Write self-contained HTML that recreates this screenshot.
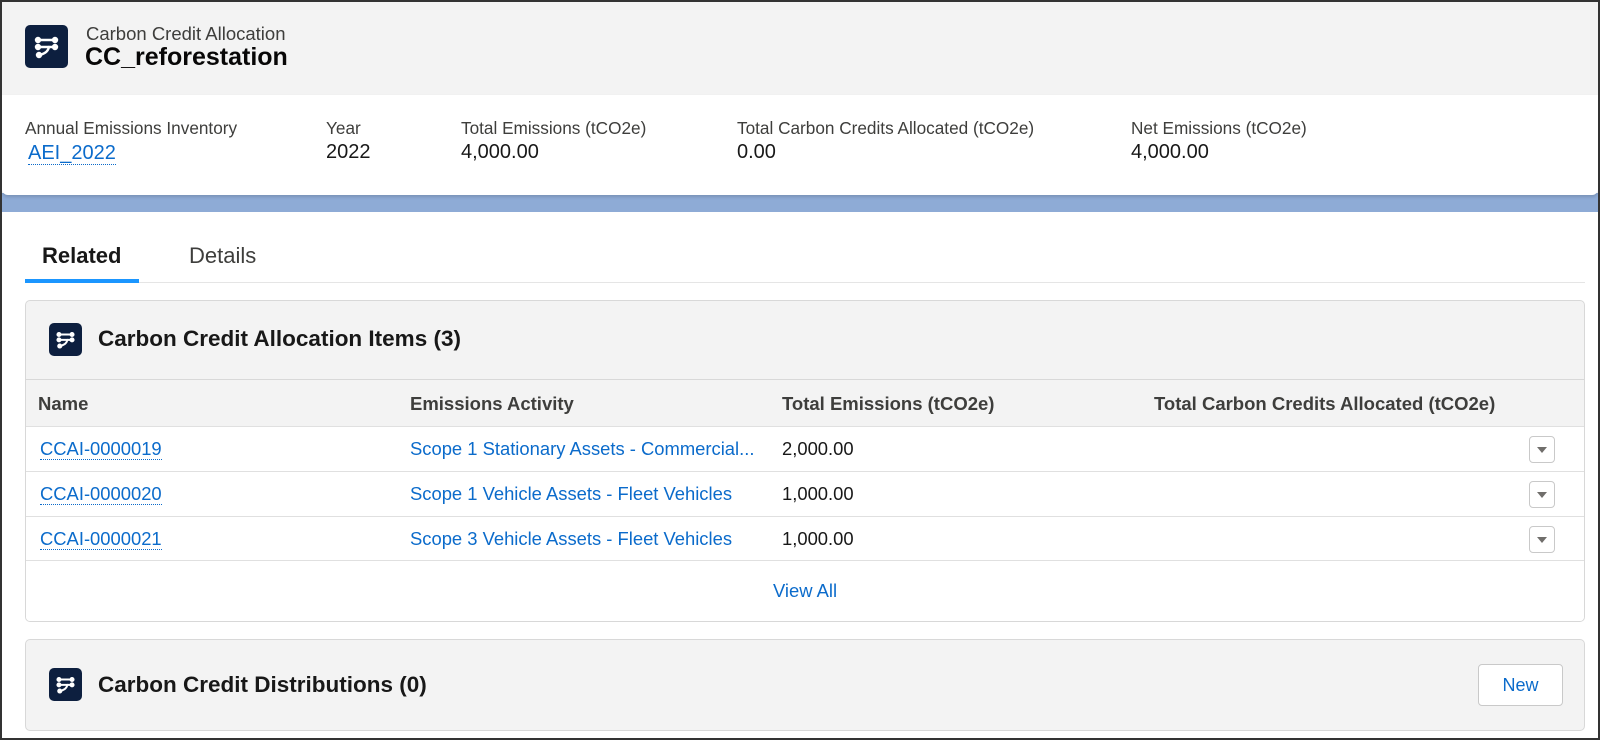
<!DOCTYPE html>
<html><head><meta charset="utf-8"><style>
*{box-sizing:border-box;margin:0;padding:0}
body{width:1600px;height:740px;overflow:hidden;background:#fff;font-family:"Liberation Sans",Arial,sans-serif;color:#181818;position:relative}
.frame{position:absolute;left:0;top:0;width:1600px;height:740px;border:2px solid #333;pointer-events:none;z-index:10}
.abs{position:absolute;white-space:nowrap}
.hdr{position:absolute;left:2px;top:2px;width:1596px;height:93px;background:#f3f3f3}
.band{position:absolute;left:2px;top:193px;width:1596px;height:19px;background:#8eabd6}
.hcard{position:absolute;left:2px;top:95px;width:1596px;height:100px;background:#fff;border-radius:0 0 6px 6px;box-shadow:0 2px 3px rgba(0,0,0,.15);z-index:2}
.icon{position:absolute;background:#0d1f3f;border-radius:5px}
.lbl{font-size:17.2px;color:#3e3e3c}
.val{font-size:20px;color:#181818}
.lnk{color:#0b6bcb;text-decoration:none}
.dot{border-bottom:1px dotted #0b6bcb}
.card{position:absolute;left:25px;width:1560px;border:1px solid #d8d8d8;border-radius:5px;background:#f3f3f3;overflow:hidden}
.th{font-size:18.5px;font-weight:bold;color:#3e3e3c}
.row{position:absolute;left:0;width:100%;background:#fff;border-top:1px solid #e0e0e0}
.td{position:absolute;font-size:18.4px;top:11px;white-space:nowrap}
.dd{position:absolute;left:1503px;top:9px;width:26px;height:27px;border:1px solid #c9c9c9;border-radius:4px;background:#fff}
.dd:after{content:"";position:absolute;left:7px;top:10px;border-left:5px solid transparent;border-right:5px solid transparent;border-top:6px solid #706e6b}
</style></head><body>
<div class="frame"></div>
<div class="hdr"></div>
<div class="band"></div>
<div class="icon" style="left:25px;top:25px;width:43px;height:43px"><svg width="43" height="43" viewBox="0 0 43 43" fill="none" stroke="#fff" stroke-width="2.4" stroke-linecap="round"><line x1="14" y1="15" x2="29" y2="15"/><circle cx="13" cy="15" r="2" fill="#fff"/><circle cx="30" cy="15" r="2" fill="#fff"/><line x1="14" y1="22" x2="29" y2="22"/><circle cx="13" cy="22" r="2" fill="#fff"/><circle cx="30" cy="22" r="2" fill="#fff"/><path d="M24 22 C23 26 21 28 15 30"/><circle cx="14" cy="30" r="2" fill="#fff"/></svg></div>
<div class="abs" style="left:86px;top:23px;font-size:18.5px;color:#3e3e3c">Carbon Credit Allocation</div>
<div class="abs" style="left:85px;top:43px;font-size:25px;font-weight:bold;color:#080707">CC_reforestation</div>
<div class="hcard">
<div class="abs lbl" style="left:23px;top:23px">Annual Emissions Inventory</div>
<div class="abs val" style="left:26px;top:47px"><span class="lnk dot">AEI_2022</span></div>
<div class="abs lbl" style="left:324px;top:23px">Year</div>
<div class="abs val" style="left:324px;top:46px">2022</div>
<div class="abs lbl" style="left:459px;top:23px">Total Emissions (tCO2e)</div>
<div class="abs val" style="left:459px;top:46px">4,000.00</div>
<div class="abs lbl" style="left:735px;top:23px">Total Carbon Credits Allocated (tCO2e)</div>
<div class="abs val" style="left:735px;top:46px">0.00</div>
<div class="abs lbl" style="left:1129px;top:23px">Net Emissions (tCO2e)</div>
<div class="abs val" style="left:1129px;top:46px">4,000.00</div>
</div>
<div class="abs" style="left:42px;top:243px;font-size:22px;font-weight:bold">Related</div>
<div class="abs" style="left:189px;top:243px;font-size:22px;color:#3e3e3c">Details</div>
<div class="abs" style="left:25px;top:282px;width:1560px;height:1px;background:#e5e5e5"></div>
<div class="abs" style="left:25px;top:279px;width:114px;height:4px;background:#1b96ff"></div>

<div class="card" style="top:300px;height:322px">
<div class="icon" style="left:23px;top:22px;width:33px;height:33px"><svg width="33" height="33" viewBox="0 0 43 43" fill="none" stroke="#fff" stroke-width="2.6" stroke-linecap="round"><line x1="14" y1="15" x2="29" y2="15"/><circle cx="13" cy="15" r="2" fill="#fff"/><circle cx="30" cy="15" r="2" fill="#fff"/><line x1="14" y1="22" x2="29" y2="22"/><circle cx="13" cy="22" r="2" fill="#fff"/><circle cx="30" cy="22" r="2" fill="#fff"/><path d="M24 22 C23 26 21 28 15 30"/><circle cx="14" cy="30" r="2" fill="#fff"/></svg></div>
<div class="abs" style="left:72px;top:25px;font-size:22.5px;font-weight:bold">Carbon Credit Allocation Items (3)</div>
<div class="abs" style="left:0;top:78px;width:100%;height:1px;background:#d8d8d8"></div>
<div class="abs th" style="left:12px;top:92px">Name</div>
<div class="abs th" style="left:384px;top:92px">Emissions Activity</div>
<div class="abs th" style="left:756px;top:92px">Total Emissions (tCO2e)</div>
<div class="abs th" style="left:1128px;top:92px">Total Carbon Credits Allocated (tCO2e)</div>
<div class="row" style="top:125px;height:45px"><div class="td" style="left:14px"><span class="lnk dot">CCAI-0000019</span></div><div class="td lnk" style="left:384px">Scope 1 Stationary Assets - Commercial...</div><div class="td" style="left:756px">2,000.00</div><div class="dd"></div></div>
<div class="row" style="top:170px;height:45px"><div class="td" style="left:14px"><span class="lnk dot">CCAI-0000020</span></div><div class="td lnk" style="left:384px">Scope 1 Vehicle Assets - Fleet Vehicles</div><div class="td" style="left:756px">1,000.00</div><div class="dd"></div></div>
<div class="row" style="top:215px;height:45px"><div class="td" style="left:14px"><span class="lnk dot">CCAI-0000021</span></div><div class="td lnk" style="left:384px">Scope 3 Vehicle Assets - Fleet Vehicles</div><div class="td" style="left:756px">1,000.00</div><div class="dd"></div></div>
<div class="row" style="top:259px;height:63px"><div class="td lnk" style="left:747px;top:19px">View All</div></div>
</div>

<div class="card" style="top:639px;height:92px">
<div class="icon" style="left:23px;top:28px;width:33px;height:33px"><svg width="33" height="33" viewBox="0 0 43 43" fill="none" stroke="#fff" stroke-width="2.6" stroke-linecap="round"><line x1="14" y1="15" x2="29" y2="15"/><circle cx="13" cy="15" r="2" fill="#fff"/><circle cx="30" cy="15" r="2" fill="#fff"/><line x1="14" y1="22" x2="29" y2="22"/><circle cx="13" cy="22" r="2" fill="#fff"/><circle cx="30" cy="22" r="2" fill="#fff"/><path d="M24 22 C23 26 21 28 15 30"/><circle cx="14" cy="30" r="2" fill="#fff"/></svg></div>
<div class="abs" style="left:72px;top:32px;font-size:22.5px;font-weight:bold">Carbon Credit Distributions (0)</div>
<div class="abs" style="left:1452px;top:24px;width:85px;height:42px;background:#fff;border:1px solid #c9c9c9;border-radius:4px;color:#0b6bcb;font-size:18px;text-align:center;line-height:40px">New</div>
</div>
</body></html>
